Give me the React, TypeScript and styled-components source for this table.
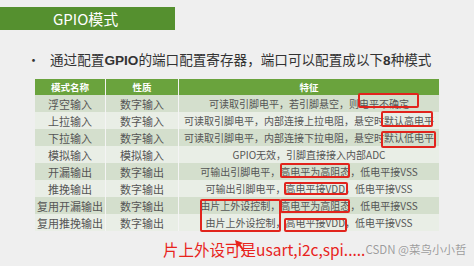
import React from "react";
import styled, { createGlobalStyle } from "styled-components";

const rows = [
  ["浮空输入", "数字输入", "可读取引脚电平，若引脚悬空，则电平不确定"],
  ["上拉输入", "数字输入", "可读取引脚电平，内部连接上拉电阻，悬空时默认高电平"],
  ["下拉输入", "数字输入", "可读取引脚电平，内部连接下拉电阻，悬空时默认低电平"],
  ["模拟输入", "模拟输入", "GPIO无效，引脚直接接入内部ADC"],
  ["开漏输出", "数字输出", "可输出引脚电平，高电平为高阻态，低电平接VSS"],
  ["推挽输出", "数字输出", "可输出引脚电平，高电平接VDD，低电平接VSS"],
  ["复用开漏输出", "数字输出", "由片上外设控制，高电平为高阻态，低电平接VSS"],
  ["复用推挽输出", "数字输出", "由片上外设控制，高电平接VDD，低电平接VSS"],
];

// annotation boxes, relative to the table
const marks = [
  [323, 14, 61, 15],
  [346, 32, 52, 16],
  [346, 52, 55, 17],
  [245, 84, 70, 15],
  [249, 103, 64, 13],
  [165, 120, 81, 33],
  [245, 120, 70, 14],
  [249, 139, 63, 14],
];

function App() {
  return (
    <Page>
      <GlobalStyle />
      <TitleBar>GPIO模式</TitleBar>
      <Bullet>
        <Dot>•</Dot>
        <span>
          通过配置<Latin>GPIO</Latin>的端口配置寄存器，端口可以配置成以下<Latin>8</Latin>种模式
        </span>
      </Bullet>
      <TableWrap>
        <Table>
          <HeadCell>模式名称</HeadCell>
          <HeadCell>性质</HeadCell>
          <HeadCell>特征</HeadCell>
          {rows.map((r, i) => (
            <React.Fragment key={i}>
              <Cell $odd={i % 2 === 0}>{r[0]}</Cell>
              <Cell $odd={i % 2 === 0}>{r[1]}</Cell>
              <Cell $odd={i % 2 === 0} $small>
                {r[2]}
              </Cell>
            </React.Fragment>
          ))}
        </Table>
        {marks.map(([x, y, w, h], i) => (
          <Mark key={i} style={{ left: x, top: y, width: w, height: h }} />
        ))}
      </TableWrap>
      <Footer>
        <Note>
          片上外设可是usart,i2c,spi.....
          <Arrow viewBox="0 0 10 12" width="10" height="12">
            <polygon points="0,0 8,3 5.5,4.5 10,11 8.5,12 4,5.8 2,8" fill="#e8231c" />
          </Arrow>
        </Note>
        <Watermark>CSDN @菜鸟小小哲</Watermark>
      </Footer>
    </Page>
  );
}

const GlobalStyle = createGlobalStyle`
  body {
    margin: 0;
    background: #efefef;
  }
`;

const Page = styled.div`
  width: 474px;
  height: 266px;
  overflow: hidden;
  background: #efefef;
  font-family: "Noto Sans CJK SC", "Noto Sans", sans-serif;
  display: flex;
  flex-direction: column;
`;

const TitleBar = styled.div`
  margin-top: 7px;
  width: 175px;
  height: 23px;
  box-sizing: border-box;
  padding-left: 53px;
  background: #55902f;
  color: #fff;
  font-size: 15px;
  line-height: 23px;
`;

const Bullet = styled.div`
  margin-top: 21px;
  padding-left: 27px;
  display: flex;
  gap: 10px;
  height: 16px;
  align-items: center;
  font-size: 13.6px;
  color: #333;
  white-space: nowrap;
`;

const Dot = styled.span`
  font-size: 13px;
`;

const Latin = styled.span`
  font-family: "Liberation Sans", sans-serif;
  font-weight: bold;
`;

const TableWrap = styled.div`
  position: relative;
  margin: 12px 0 0 35px;
  width: 404px;
`;

const Table = styled.div`
  display: grid;
  grid-template-columns: 70px 73px 261px;
  grid-template-rows: 16px repeat(8, 17px);
`;

const HeadCell = styled.div`
  background: #6aa33d;
  color: #fff;
  font-size: 9.5px;
  font-weight: bold;
  display: flex;
  align-items: center;
  justify-content: center;
  & + & {
    border-left: 1px solid #f2f2f2;
  }
`;

const Cell = styled.div<{ $odd: boolean; $small?: boolean }>`
  background: ${(p) => (p.$odd ? "#d4dfcd" : "#e9eee6")};
  color: #555;
  font-size: ${(p) => (p.$small ? "10px" : "11px")};
  display: flex;
  align-items: center;
  justify-content: center;
  white-space: nowrap;
  overflow: hidden;
  border-left: ${(p) => (p.$small ? "1px solid #f4f4f4" : "0")};
  &:nth-child(3n + 2) {
    border-left: 1px solid #f4f4f4;
  }
`;

const Mark = styled.div`
  position: absolute;
  box-sizing: border-box;
  border: 2px solid #e1241d;
  border-radius: 2px;
`;

const Footer = styled.div`
  margin-top: 6px;
  display: flex;
  align-items: flex-end;
  height: 22px;
`;

const Note = styled.div`
  position: relative;
  margin-left: 163px;
  color: #e8231c;
  font-size: 15.5px;
  line-height: 20px;
  white-space: nowrap;
`;

const Arrow = styled.svg`
  position: absolute;
  left: 72px;
  top: 1px;
`;

const Watermark = styled.div`
  margin-left: auto;
  margin-right: 10px;
  margin-bottom: 3px;
  color: #9c9c9c;
  font-size: 11.5px;
  line-height: 14px;
  text-shadow: 0 0 1px #fff;
  white-space: nowrap;
`;

export default App;
